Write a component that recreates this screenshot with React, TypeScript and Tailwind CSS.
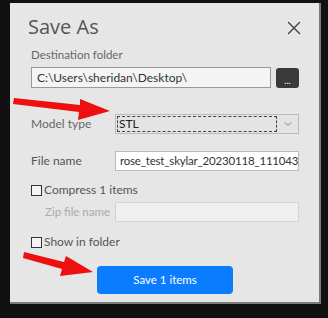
import { X, ChevronDown } from "lucide-react";

const font = { fontFamily: 'Lato, "Open Sans", sans-serif' };

function Check({ label }: { label: string }) {
  return (
    <div className="flex items-center h-[14px]">
      <div className="w-[11px] h-[11px] border border-[#333] bg-[#f4f4f4]" />
      <span className="ml-[2px] text-[12px] leading-[14px] text-[#555] whitespace-nowrap">{label}</span>
    </div>
  );
}

export default function App() {
  return (
    <div className="relative w-[328px] h-[318px] bg-[#111111] pt-[3px] pl-[10px]" style={font}>
      <div className="w-[311px] h-[301px] bg-[#e6e6e6] border-r-2 border-b-2 border-[#7a7a7a] pl-[21px] pr-[20px]">
        <div className="flex items-start justify-between pt-[11px]">
          <div className="text-[20px] leading-[26px] text-[#555] -ml-[3px]" style={{ fontFamily: '"Open Sans", sans-serif' }}>
            Save As
          </div>
          <X size={22} strokeWidth={1.6} className="text-[#444] mt-[3px] -mr-[6px]" />
        </div>
        <div className="mt-[7px] text-[11.5px] leading-[16px] text-[#666] whitespace-nowrap">Destination folder</div>
        <div className="mt-[4px] flex items-center">
          <div className="w-[241px] h-[21px] bg-[#f4f4f4] border border-[#999] flex items-center pl-[5px] text-[12px] text-[#333] whitespace-nowrap">
            C:\Users\sheridan\Desktop\
          </div>
          <div className="ml-[5px] w-[23px] h-[20px] rounded-[3px] bg-[#3a3a3a] flex items-end justify-center pb-[3px] text-[9px] leading-[9px] text-white">
            ...
          </div>
        </div>

        <div className="mt-[26px] flex items-center">
          <div className="w-[84px] text-[12px] text-[#666] whitespace-nowrap">Model type</div>
          <div className="flex-1 h-[20px] border border-[#bbb] bg-[#e4e4e4] flex items-center pl-[1px] pr-[4px]">
            <div className="flex-1 h-[16px] border border-dashed border-[#444] flex items-center pl-[1px] text-[12px] text-[#222]">
              STL
            </div>
            <ChevronDown size={12} strokeWidth={1.6} className="ml-[5px] text-[#666]" />
          </div>
        </div>

        <div className="mt-[17px] flex items-center">
          <div className="w-[84px] text-[12px] text-[#555] whitespace-nowrap">File name</div>
          <div className="flex-1 h-[20px] border border-[#bbb] bg-white flex items-center pl-[4px] text-[11.5px] tracking-[-0.2px] text-[#333] overflow-hidden whitespace-nowrap">
            rose_test_skylar_20230118_111043
          </div>
        </div>

        <div className="mt-[12px]">
          <Check label="Compress 1 items" />
        </div>

        <div className="mt-[5px] flex items-center">
          <div className="w-[84px] pl-[14px] text-[11.5px] text-[#aaa] whitespace-nowrap">Zip file name</div>
          <div className="flex-1 h-[20px] border border-[#d4d4d4] bg-[#efefef]" />
        </div>

        <div className="mt-[13px]">
          <Check label="Show in folder" />
        </div>

        <div className="mt-[17px] pl-[66px]">
          <div className="w-[136px] h-[28px] rounded-[4px] bg-[#0a7cff] flex items-center justify-center text-[11.5px] text-white">
            Save 1 items
          </div>
        </div>
      </div>

      <svg className="absolute left-0 top-0 pointer-events-none" width="328" height="318">
        <g fill="#ee0f0f">
          <polygon points="14,98 80,105 80,99 110,111 78,120 79,112 13,104" />
          <polygon points="24,252 64,262 66,256 93,272 60,276 62,269 23,258" />
        </g>
      </svg>
    </div>
  );
}
